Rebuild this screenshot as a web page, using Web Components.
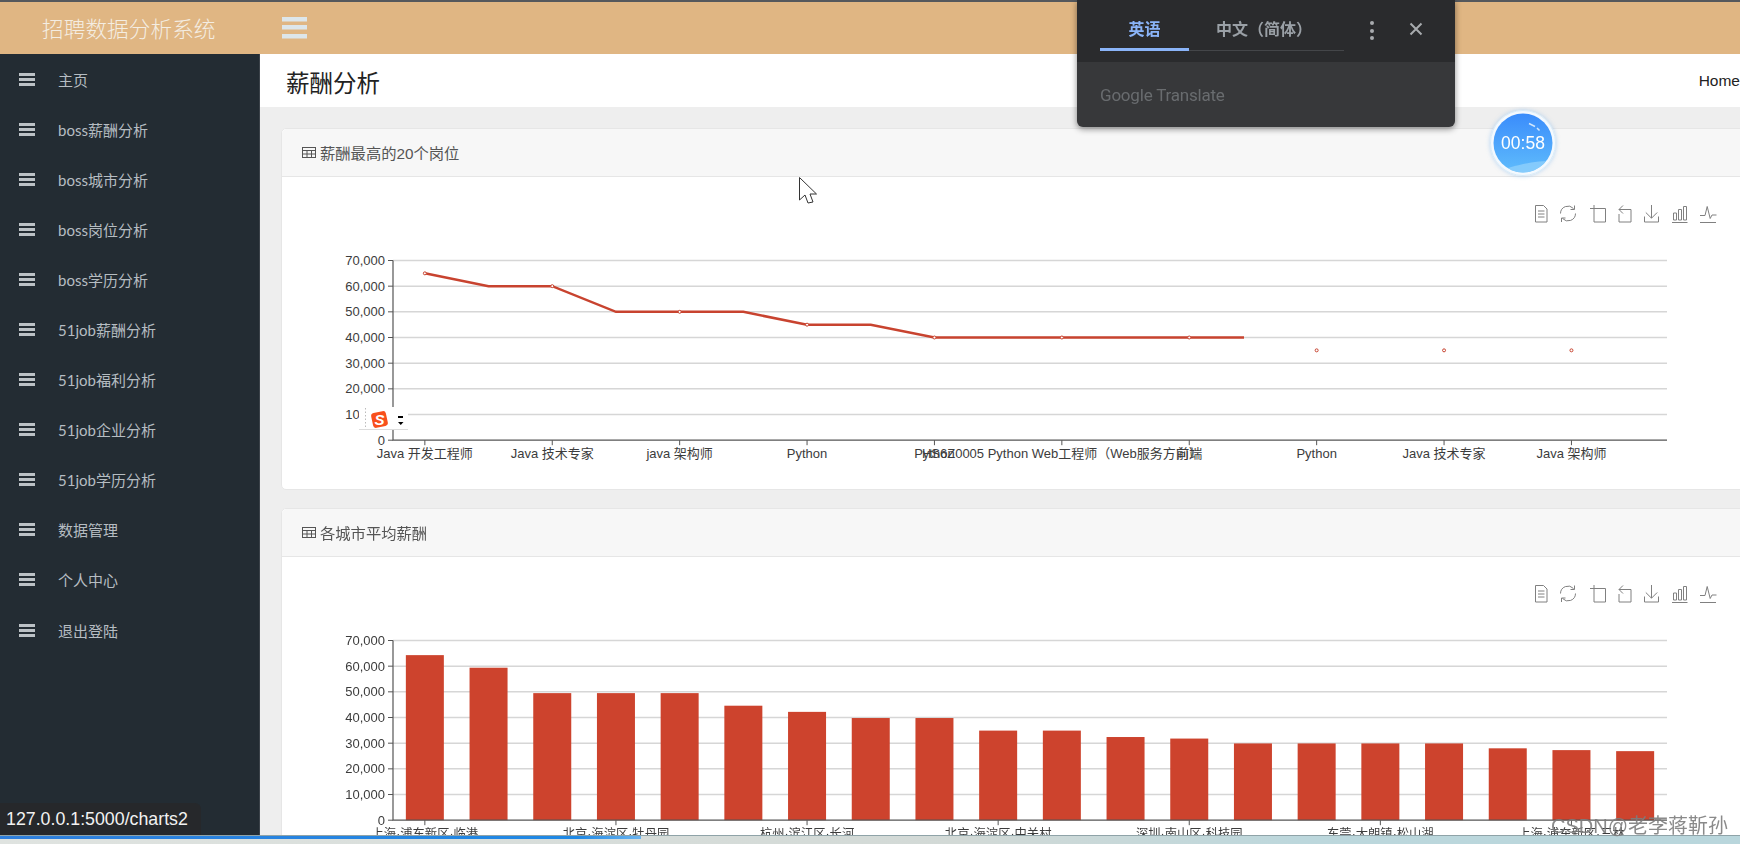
<!DOCTYPE html>
<html lang="zh">
<head>
<meta charset="utf-8">
<title>招聘数据分析系统</title>
<style>
  html, body { margin: 0; height: 844px; overflow: hidden; background: #eee; }
  body { font-family: "Liberation Sans", "Noto Sans CJK SC", sans-serif; position: relative; }
</style>
</head>
<body>
<x-app>
  <x-topbar slot="top">招聘数据分析系统</x-topbar>
  <x-sidebar slot="side">
    <x-nav-item>主页</x-nav-item>
    <x-nav-item>boss薪酬分析</x-nav-item>
    <x-nav-item>boss城市分析</x-nav-item>
    <x-nav-item>boss岗位分析</x-nav-item>
    <x-nav-item>boss学历分析</x-nav-item>
    <x-nav-item>51job薪酬分析</x-nav-item>
    <x-nav-item>51job福利分析</x-nav-item>
    <x-nav-item>51job企业分析</x-nav-item>
    <x-nav-item>51job学历分析</x-nav-item>
    <x-nav-item>数据管理</x-nav-item>
    <x-nav-item>个人中心</x-nav-item>
    <x-nav-item>退出登陆</x-nav-item>
  </x-sidebar>
  <x-page-title>薪酬分析</x-page-title>
  <x-card>
    <span slot="title">薪酬最高的20个岗位</span>
    <x-chart type="line"></x-chart>
  </x-card>
  <x-card>
    <span slot="title">各城市平均薪酬</span>
    <x-chart type="bar"></x-chart>
  </x-card>
</x-app>
<x-translate-popup></x-translate-popup>
<x-timer>00:58</x-timer>
<x-ime></x-ime>
<x-cursor></x-cursor>
<x-status-tip>127.0.0.1:5000/charts2</x-status-tip>
<x-taskbar></x-taskbar>
<x-watermark>CSDN@老李蒋靳孙</x-watermark>

<script>
const FONT = '"Liberation Sans", "Noto Sans CJK SC", sans-serif';

function shadow(el, html) {
  const template = document.createElement("template");
  template.innerHTML = html;
  el.attachShadow({ mode: "open" });
  el.shadowRoot.appendChild(template.content.cloneNode(true));
}

class XApp extends HTMLElement {
  constructor() {
    super();
    shadow(this, `
      <style>
        :host { display: block; height: 844px; border-top: 2px solid #55585c; box-sizing: border-box; filter: blur(.35px); }
        .body { display: flex; height: 790px; }
        .main { flex: 1; min-width: 0; overflow: hidden; display: flex; flex-direction: column; }
        .content { padding: 21px 0 0 21px; display: flex; flex-direction: column; gap: 18px; }
      </style>
      <slot name="top"></slot>
      <div class="body">
        <slot name="side"></slot>
        <div class="main">
          <slot name="title"></slot>
          <div class="content"><slot></slot></div>
        </div>
      </div>
    `);
  }
}

class XTopbar extends HTMLElement {
  constructor() {
    super();
    shadow(this, `
      <style>
        :host { display: flex; align-items: center; height: 52px; background: #e0b683; }
        .logo { width: 259px; box-sizing: border-box; padding: 0 0 2px 42px; color: #f4ede2; font: 300 21.7px ${FONT}; }
        svg { display: block; margin-left: 23px; }
      </style>
      <div class="logo"><slot></slot></div>
      <svg width="25" height="22" viewBox="0 0 25 22">
        <rect y="0" width="25" height="4.5" fill="#dde6ea"/>
        <rect y="8" width="25" height="4.5" fill="#dde6ea"/>
        <rect y="17" width="25" height="4.5" fill="#dde6ea"/>
      </svg>
    `);
  }
}

class XSidebar extends HTMLElement {
  constructor() {
    super();
    shadow(this, `
      <style>
        :host { display: block; flex: 0 0 260px; height: 790px; background: #232c33; box-sizing: border-box; border-right: 1px solid #3b4249; }
      </style>
      <slot></slot>
    `);
  }
}

class XNavItem extends HTMLElement {
  constructor() {
    super();
    shadow(this, `
      <style>
        :host { display: flex; align-items: center; height: 50.1px; padding-left: 19px; color: #b6bdc2; font: 15px Lato, "Noto Sans CJK SC", sans-serif; }
        .bars { width: 16px; height: 13px; margin-right: 23px; display: flex; flex-direction: column; justify-content: space-between; }
        .bars i { display: block; height: 3px; background: #bcc2c6; }
      </style>
      <div class="bars"><i></i><i></i><i></i></div>
      <slot></slot>
    `);
  }
}

class XPageTitle extends HTMLElement {
  constructor() {
    super();
    shadow(this, `
      <style>
        :host { display: flex; align-items: center; flex: 0 0 53px; padding-left: 26px; background: #fff; }
        .t { font: 23.5px ${FONT}; color: #222; padding-top: 3px; }
        .home { margin-left: auto; font: 15.500px ${FONT}; color: #222; }
      </style>
      <div class="t"><slot></slot></div>
      <div class="home">Home</div>
    `);
  }
  connectedCallback() {
    this.slot = "title";
  }
}

class XCard extends HTMLElement {
  constructor() {
    super();
    shadow(this, `
      <style>
        :host { display: block; margin-right: -40px; background: #fff; border: 1px solid #e6e6e6; border-radius: 5px; flex: 0 0 auto; }
        .head { display: flex; align-items: center; gap: 4px; height: 48px; padding: 0 0 1px 20px; box-sizing: border-box; background: #f7f7f7; border-bottom: 1px solid #e6e6e6; border-radius: 5px 5px 0 0; color: #555; font: 15.3px ${FONT}; }
        svg { display: block; }
      </style>
      <div class="head">
        <svg width="14" height="11" viewBox="0 0 14 11" fill="none" stroke="#555">
          <rect x=".5" y=".5" width="13" height="10"/>
          <path d="M.5 3.5h13M.5 7h13M5 3.5v7M9.500 3.500v7"/>
        </svg>
        <slot name="title"></slot>
      </div>
      <slot></slot>
    `);
  }
}

// plot area, in the card body's own coordinates
const PLOT = { left: 111, right: 1385, top: 83.5, bottom: 263.2, max: 70000 };
const CAT = (PLOT.right - PLOT.left) / 20;
const px = (i) => PLOT.left + CAT * (i + 0.5);
const py = (v) => PLOT.bottom - (v / PLOT.max) * (PLOT.bottom - PLOT.top);

const LINE_DATA = [65000, 60000, 60000, 50000, 50000, 50000, 45000, 45000, 40000, 40000, 40000, 40000, 40000, 40000, 35000, 35000, 35000, 35000, 35000, 35000];
const LINE_LABELS = {
  0: "Java 开发工程师", 2: "Java 技术专家", 4: "java 架构师", 6: "Python", 8: "Python",
  10: "HS6Z0005 Python Web工程师（Web服务方向）", 12: "前端", 14: "Python", 16: "Java 技术专家", 18: "Java 架构师",
};
const BAR_DATA = [64300, 59400, 49500, 49500, 49500, 44600, 42200, 39800, 39800, 34900, 34900, 32400, 31800, 29900, 29900, 29900, 29900, 28000, 27300, 26900];
const BAR_LABELS = {
  0: "上海·浦东新区·临港", 3: "北京·海淀区·牡丹园", 6: "杭州·滨江区·长河", 9: "北京·海淀区·中关村",
  12: "深圳·南山区·科技园", 15: "东莞·大朗镇·松山湖", 18: "上海·浦东新区·三林",
};

const TOOLBAR = `
  <g fill="none" stroke="#808080" stroke-width="1" transform="translate(-282,-177)">
    <path d="M1535.500 205.500h8l3.500 3.500v13h-11.500zM1538 211h6.500M1538 214h6.500M1538 217h6.500"/>
    <path d="M1573.500 208.500A7.500 7.500 0 0 0 1560.500 213.500M1562.500 218.500A7.500 7.500 0 0 0 1575.500 213.500"/>
    <path d="M1574.500 205.500v4h-4M1561.500 222v-4h4"/>
    <path d="M1590 208.500h15.500v13.500h-11.500v-17"/>
    <path d="M1619 209.500h12v12.500h-12v-8M1623 205.500l-4 4 4 4"/>
    <path d="M1651.500 205v13M1645.800 212.500l5.700 5.700 5.700-5.700M1644.500 216.500v5.500h14v-5.500"/>
    <path d="M1673.500 213h3v7h-3zM1678.500 209.500h3v10.500h-3zM1683.500 206.500h3v13.500h-3zM1672 222.500h15.500"/>
    <path d="M1700 215.500h5l2.200-9 3 12 1.800-3.500h4.500M1700 222.500h16"/>
  </g>`;

class XChart extends HTMLElement {
  constructor() {
    super();
    shadow(this, `
      <style>
        :host { display: block; height: 312px; }
        svg { display: block; font-family: ${FONT}; }
        text { font-size: 13px; fill: #3c3c3c; }
        text.small { font-size: 12.3px; }
      </style>
      <svg width="1500" height="312" viewBox="0 0 1500 312"></svg>
    `);
  }

  connectedCallback() {
    const isBar = this.getAttribute("type") === "bar";
    let out = TOOLBAR;
    for (let v = 0; v <= PLOT.max; v += 10000) {
      const y = py(v);
      if (v > 0) {
        out += `<line x1="${PLOT.left}" x2="${PLOT.right}" y1="${y}" y2="${y}" stroke="#d6d6d6" stroke-width="1.500"/>`;
      }
      out += `<line x1="${PLOT.left - 5}" x2="${PLOT.left}" y1="${y}" y2="${y}" stroke="#555"/>`;
      out += `<text x="${PLOT.left - 8}" y="${y + 4.5}" text-anchor="end">${v.toLocaleString("en-US")}</text>`;
    }
    out += isBar ? this.bars() : this.line();
    out += `<path d="M${PLOT.left} ${PLOT.top}V${PLOT.bottom}H${PLOT.right}" fill="none" stroke="#555" stroke-width="1.200"/>`;
    const labels = isBar ? BAR_LABELS : LINE_LABELS;
    for (const i in labels) {
      out += `<line x1="${px(+i)}" x2="${px(+i)}" y1="${PLOT.bottom}" y2="${PLOT.bottom + 5}" stroke="#555"/>`;
      out += `<text ${isBar ? 'class="small"' : ""} x="${px(+i)}" y="${PLOT.bottom + 17.5}" text-anchor="middle">${labels[i]}</text>`;
    }
    this.shadowRoot.querySelector("svg").innerHTML = out;
  }

  bars() {
    return BAR_DATA.map((v, i) => {
      const y = py(v);
      return `<rect x="${px(i) - 19}" y="${y}" width="38" height="${PLOT.bottom - y}" fill="#cd432d"/>`;
    }).join("");
  }

  line() {
    // the line is caught mid-animation: it stops short of the last points
    const pts = LINE_DATA.slice(0, 13).map((v, i) => `${px(i)},${py(v)}`);
    pts.push(`962,${py(40000)}`);
    let out = `<polyline points="${pts.join(" ")}" fill="none" stroke="#c8432f" stroke-width="2.500"/>`;
    LINE_DATA.forEach((v, i) => {
      if (i % 2 === 0) {
        out += `<circle cx="${px(i)}" cy="${py(v)}" r="1.500" fill="#fff" stroke="#c8432f" stroke-width="1"/>`;
      }
    });
    return out;
  }
}

class XTranslatePopup extends HTMLElement {
  constructor() {
    super();
    shadow(this, `
      <style>
        :host { position: absolute; left: 1077px; top: 0; width: 378px; height: 127px; background: #37383a; border-radius: 0 0 6px 6px; box-shadow: 0 2px 6px rgba(0,0,0,.45); font-family: ${FONT}; overflow: hidden; }
        .top { position: relative; height: 62px; background: #2a2b2d; }
        .tabs { position: absolute; left: 23px; top: 9px; width: 244px; height: 42px; display: flex; border-bottom: 1px solid #444649; box-sizing: border-box; }
        .tab { font-size: 16px; font-weight: 700; color: #9aa0a6; line-height: 41px; white-space: nowrap; }
        .tab.on { width: 89px; text-align: center; color: #8ab4f8; border-bottom: 3px solid #8ab4f8; height: 42px; box-sizing: border-box; }
        .tab.off { margin-left: 27px; }
        .dots { position: absolute; left: 293px; top: 21px; display: flex; flex-direction: column; gap: 3.5px; }
        .dots i { display: block; width: 4px; height: 4px; border-radius: 50%; background: #a8abae; }
        svg { position: absolute; left: 332px; top: 22px; }
        .brand { padding: 23px 0 0 23px; color: #696c6f; font: 17px Roboto, ${FONT}; letter-spacing: -.2px; }
      </style>
      <div class="top">
        <div class="tabs">
          <div class="tab on">英语</div>
          <div class="tab off">中文（简体）</div>
        </div>
        <div class="dots"><i></i><i></i><i></i></div>
        <svg width="14" height="14" viewBox="0 0 14 14"><path d="M1.500 1.500l11 11M12.500 1.500l-11 11" stroke="#a8abae" stroke-width="2"/></svg>
      </div>
      <div class="brand">Google Translate</div>
    `);
  }
}

class XTimer extends HTMLElement {
  constructor() {
    super();
    shadow(this, `
      <style>
        :host { position: absolute; left: 1490px; top: 110px; width: 66px; height: 66px; border-radius: 50%; box-shadow: 0 0 4px rgba(120,180,240,.5); }
        svg { position: absolute; left: 0; top: 0; }
        .t { position: relative; display: flex; align-items: center; justify-content: center; height: 100%; color: #fff; font: 17.500px "Liberation Sans", sans-serif; }
      </style>
      <svg width="66" height="66" viewBox="0 0 66 66">
        <defs>
          <linearGradient id="g" x1="0" y1="0" x2="0" y2="1"><stop offset="0" stop-color="#3a8cfb"/><stop offset="1" stop-color="#5fbcfc"/></linearGradient>
          <clipPath id="c"><circle cx="33" cy="33" r="29.500"/></clipPath>
        </defs>
        <circle cx="33" cy="33" r="32.500" fill="#f4f9fe" stroke="#d8ebf8" stroke-width="1"/>
        <circle cx="33" cy="33" r="29.500" fill="url(#g)"/>
        <g clip-path="url(#c)">
          <path d="M8 60c14-2 24-8 50-9v15H8z" fill="#8fd0fb" opacity=".8"/>
        </g>
        <path d="M39 13.500l6 3M47 18l2.500 2.500" stroke="#cfe5fc" stroke-width="1.500" fill="none"/>
      </svg>
      <div class="t"><slot></slot></div>
    `);
  }
}

class XIme extends HTMLElement {
  constructor() {
    super();
    shadow(this, `
      <style>
        :host { position: absolute; left: 359px; top: 407px; width: 49px; height: 23px; background: #fff; border-bottom: 1px solid #dcdcdc; box-sizing: border-box; }
        svg { display: block; }
        text { font: italic 700 15px "Liberation Sans", sans-serif; fill: #fff; }
      </style>
      <svg width="49" height="23" viewBox="0 0 49 23">
        <line x1="6.500" x2="6.500" y1="1" y2="22" stroke="#bbb" stroke-dasharray="1.500 2"/>
        <rect x="13" y="5" width="15" height="15" rx="3" fill="#f8501c" transform="rotate(-12 20.500 12.500)"/>
        <text x="15.500" y="18">S</text>
        <rect x="39" y="9" width="5" height="2" fill="#000"/>
        <path d="M39 15h5.500l-2.750 3z" fill="#000"/>
      </svg>
    `);
  }
}

class XCursor extends HTMLElement {
  constructor() {
    super();
    shadow(this, `
      <style>
        :host { position: absolute; left: 797px; top: 175px; width: 22px; height: 30px; }
        svg { display: block; }
      </style>
      <svg width="22" height="30" viewBox="0 0 22 30">
        <path d="M2.500 2.500V25l5.500-5 3 8 5-1-3-8h6.500z" fill="#fff" stroke="#333" stroke-width="1"/>
      </svg>
    `);
  }
}

class XStatusTip extends HTMLElement {
  constructor() {
    super();
    shadow(this, `
      <style>
        :host { position: absolute; left: 0; top: 803px; height: 32px; padding: 0 13px 0 6px; display: flex; align-items: center; background: #26282b; border-radius: 0 6px 0 0; color: #f2f2f2; font: 17.800px "Liberation Sans", sans-serif; }
      </style>
      <slot></slot>
    `);
  }
}

class XTaskbar extends HTMLElement {
  constructor() {
    super();
    shadow(this, `
      <style>
        :host { position: absolute; left: 0; top: 835px; width: 1740px; height: 9px; box-sizing: border-box; border-top: 1px solid #8fa3a8; background: linear-gradient(90deg, #dfe3e0 0%, #d2d9d6 55%, #bcd7dc 75%, #b9d6dc 100%); }
        .bar { height: 2.500px; width: 641px; background: linear-gradient(90deg, #2f7fdc, #1e88e5 90%, #6ab4f0); }
      </style>
      <div class="bar"></div>
    `);
  }
}

class XWatermark extends HTMLElement {
  constructor() {
    super();
    shadow(this, `
      <style>
        :host { position: absolute; left: 1551px; top: 813px; color: rgba(125,125,125,.9); font: 20px ${FONT}; white-space: nowrap; line-height: 26px; }
      </style>
      <slot></slot>
    `);
  }
}

customElements.define("x-app", XApp);
customElements.define("x-topbar", XTopbar);
customElements.define("x-sidebar", XSidebar);
customElements.define("x-nav-item", XNavItem);
customElements.define("x-page-title", XPageTitle);
customElements.define("x-card", XCard);
customElements.define("x-chart", XChart);
customElements.define("x-translate-popup", XTranslatePopup);
customElements.define("x-timer", XTimer);
customElements.define("x-ime", XIme);
customElements.define("x-cursor", XCursor);
customElements.define("x-status-tip", XStatusTip);
customElements.define("x-taskbar", XTaskbar);
customElements.define("x-watermark", XWatermark);
</script>
</body>
</html>
